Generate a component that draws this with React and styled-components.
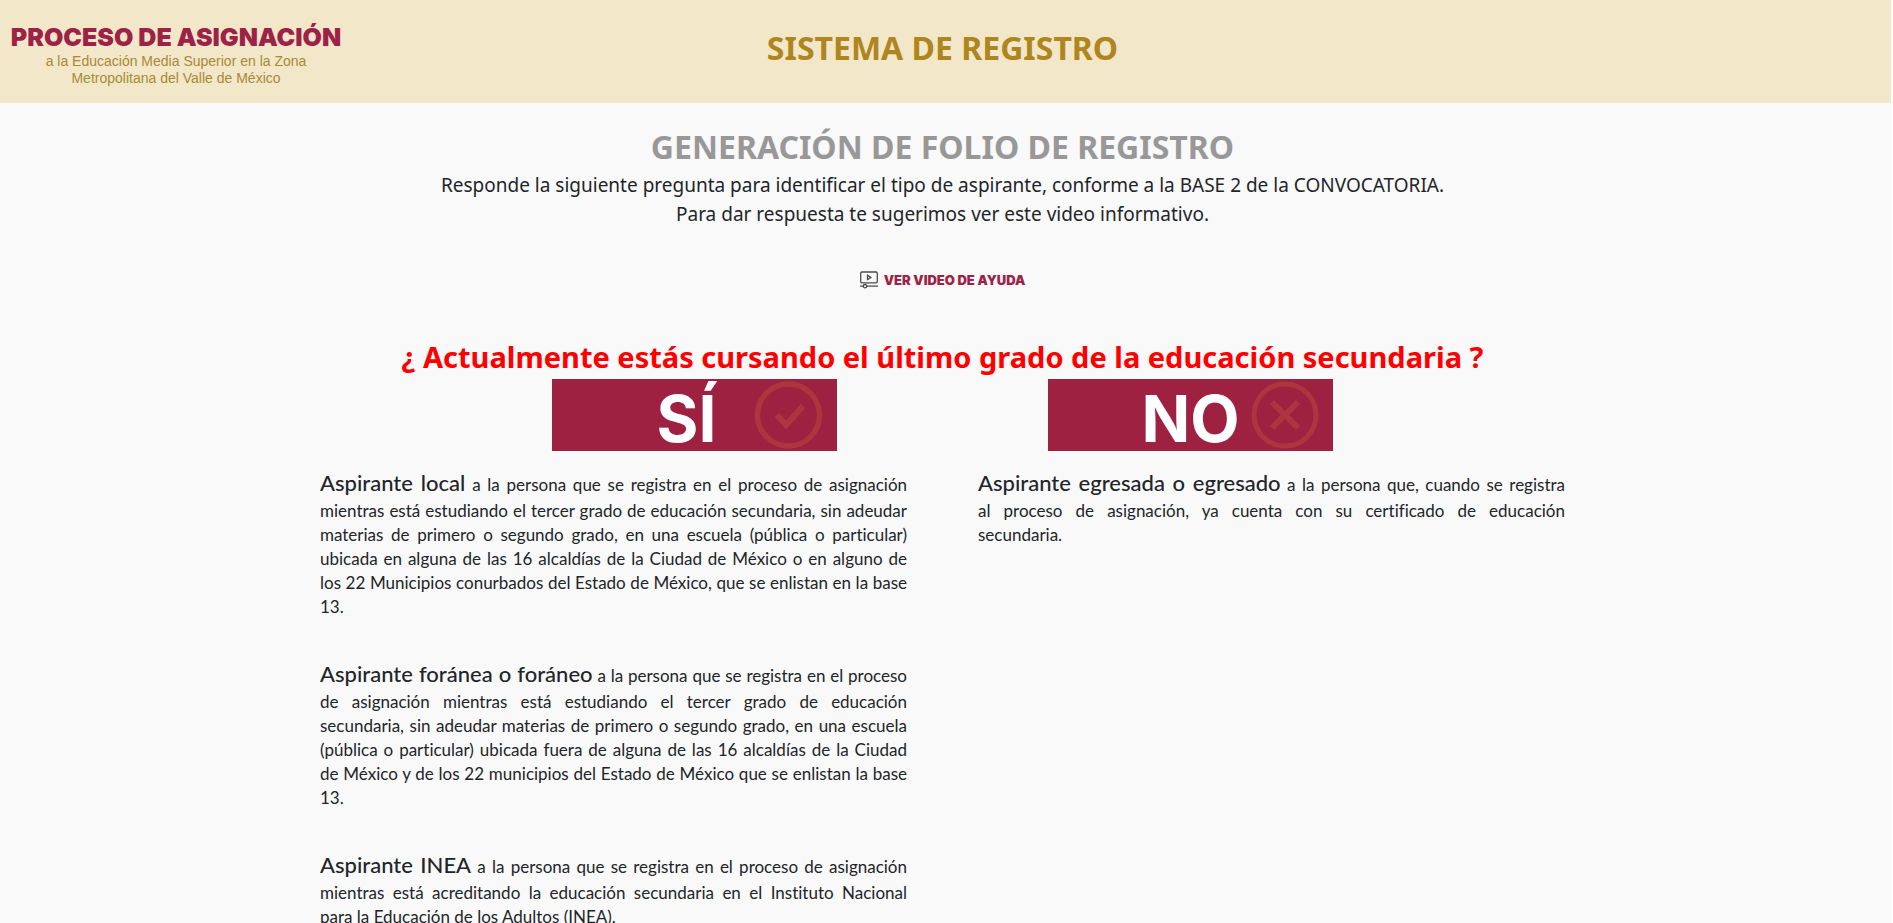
import React from "react";
import styled, { createGlobalStyle } from "styled-components";

const Global = createGlobalStyle`
  * { box-sizing: border-box; }
  html { background: #ffffff; scrollbar-width: none; }
  body {
    margin: 0;
    color: #212529;
    font-family: "Noto Sans", sans-serif;
  }
  h1, h2, h3, p { margin: 0; }
`;

const Page = styled.div`
  margin-right: 2px;
  min-height: 100vh;
  background: #f9f9f9;
`;

const Header = styled.header`
  display: grid;
  grid-template-columns: 1fr auto 1fr;
  align-items: center;
  height: 103px;
  padding: 0 6px 0 0;
  background: #f2e7c9;
`;

const Brand = styled.div`
  width: 352px;
  padding-top: 6px;
  text-align: center;
  font: 14px/17px "Liberation Sans", Arial, sans-serif;
  color: #a88a34;
`;

const BrandName = styled.strong`
  display: block;
  margin-bottom: 2px;
  font: 900 25px/28px Inter, sans-serif;
  color: #9d2247;
  white-space: nowrap;
`;

const SystemTitle = styled.h1`
  font-size: 32px;
  line-height: 38px;
  color: #af861e;
  padding-bottom: 8px;
`;

const Main = styled.main`
  padding: 25px 6px 0 0;
  text-align: center;
`;

const Title = styled.h2`
  font-size: 32px;
  line-height: 38px;
  color: #989898;
`;

const Intro = styled.p`
  font-size: 19px;
  line-height: 29px;
  padding-top: 5px;
`;

const HelpLink = styled.a`
  display: inline-flex;
  align-items: center;
  gap: 6px;
  margin: 39px 0 46px;
  font: 900 13px/24px Inter, sans-serif;
  color: #9d2247;
  text-decoration: none;
  svg { display: block; }
`;

const Question = styled.h3`
  padding-bottom: 3px;
  font-size: 29px;
  line-height: 38px;
  color: #ff0000;
`;

const Answers = styled.div`
  display: flex;
  justify-content: center;
  gap: 211px;
`;

const Answer = styled.button`
  position: relative;
  width: 285px;
  height: 72px;
  padding: 8px ${(p) => (p.$inset ? 16 : 0)}px 0 0;
  border: 0;
  background: #9f2142;
  color: #ffffff;
  font: 700 64px/64px Inter, sans-serif;
  cursor: pointer;
  svg { position: absolute; top: 0; right: 12px; }
`;

const Columns = styled.div`
  display: grid;
  grid-template-columns: 1fr 1fr;
  gap: 71px;
  width: 67%;
  max-width: 1245px;
  margin: 16px auto 0;
`;

const Definition = styled.p`
  margin-bottom: 39px;
  font: 17px/24px Lato, sans-serif;
  font-variant-ligatures: none;
  text-align: justify;
`;

const Term = styled.strong`
  font-size: 22px;
  line-height: 32px;
  font-weight: 500;
`;

const VideoIcon = () => (
  <svg width="18" height="18" viewBox="0 0 18 18" fill="none" stroke="#4b4b4b" strokeWidth="1.3" aria-hidden="true">
    <rect x="0.7" y="1" width="16.6" height="10.8" rx="1.2" />
    <path d="M7.5 4.2v4.4l3.4-2.2z" />
    <path d="M0 15.2h3.2M6.8 15.2H18" />
    <circle cx="5" cy="15.2" r="1.7" />
  </svg>
);

const CheckIcon = () => (
  <svg width="72" height="72" viewBox="0 0 72 72" fill="none" stroke="#ad353e" aria-hidden="true">
    <circle cx="35.5" cy="36" r="31" strokeWidth="5.5" />
    <path d="M24 36l9 10 17-19" strokeWidth="6" />
  </svg>
);

const CrossIcon = () => (
  <svg width="72" height="72" viewBox="0 0 72 72" fill="none" stroke="#ad353e" aria-hidden="true">
    <circle cx="36" cy="36" r="31" strokeWidth="5" />
    <path d="M23 23l26 26M49 23L23 49" strokeWidth="6" />
  </svg>
);

export default function App() {
  return (
    <>
      <Global />
      <Page>
        <Header>
          <Brand>
            <BrandName>PROCESO DE ASIGNACIÓN</BrandName>
            a la Educación Media Superior en la Zona
            <br />
            Metropolitana del Valle de México
          </Brand>
          <SystemTitle>SISTEMA DE REGISTRO</SystemTitle>
        </Header>
        <Main>
          <Title>GENERACIÓN DE FOLIO DE REGISTRO</Title>
          <Intro>
            Responde la siguiente pregunta para identificar el tipo de aspirante, conforme a la BASE 2 de la CONVOCATORIA.
            <br />
            Para dar respuesta te sugerimos ver este video informativo.
          </Intro>
          <HelpLink href="#video">
            <VideoIcon />
            VER VIDEO DE AYUDA
          </HelpLink>
          <Question>¿ Actualmente estás cursando el último grado de la educación secundaria ?</Question>
          <Answers>
            <Answer type="button" $inset>SÍ<CheckIcon /></Answer>
            <Answer type="button">NO<CrossIcon /></Answer>
          </Answers>
          <Columns>
            <div>
              <Definition>
                <Term>Aspirante local</Term> a la persona que se registra en el proceso de asignación mientras está
                estudiando el tercer grado de educación secundaria, sin adeudar materias de primero o segundo grado, en
                una escuela (pública o particular) ubicada en alguna de las 16 alcaldías de la Ciudad de México o en
                alguno de los 22 Municipios conurbados del Estado de México, que se enlistan en la base 13.
              </Definition>
              <Definition>
                <Term>Aspirante foránea o foráneo</Term> a la persona que se registra en el proceso de asignación
                mientras está estudiando el tercer grado de educación secundaria, sin adeudar materias de primero o
                segundo grado, en una escuela (pública o particular) ubicada fuera de alguna de las 16 alcaldías de la
                Ciudad de México y de los 22 municipios del Estado de México que se enlistan la base 13.
              </Definition>
              <Definition>
                <Term>Aspirante INEA</Term> a la persona que se registra en el proceso de asignación mientras está
                acreditando la educación secundaria en el Instituto Nacional para la Educación de los Adultos (INEA).
              </Definition>
            </div>
            <div>
              <Definition>
                <Term>Aspirante egresada o egresado</Term> a la persona que, cuando se registra al{"\u00a0"}proceso de
                asignación, ya cuenta con su certificado de educación secundaria.
              </Definition>
            </div>
          </Columns>
        </Main>
      </Page>
    </>
  );
}
